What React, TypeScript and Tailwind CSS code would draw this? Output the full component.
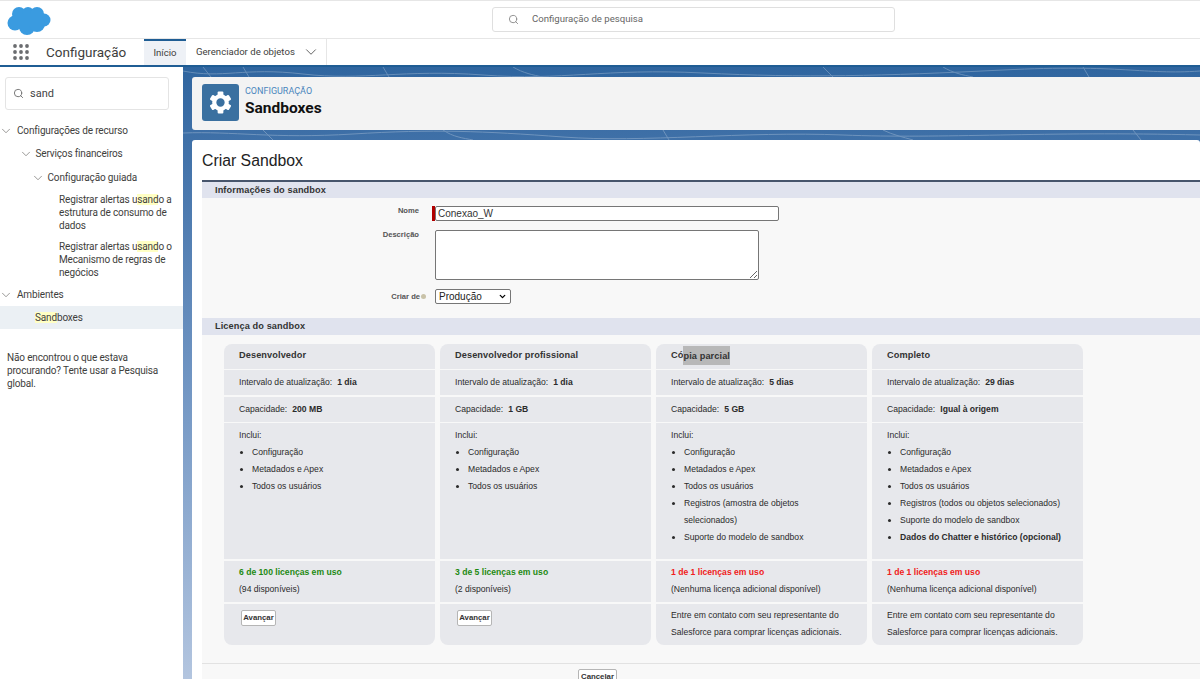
import { ChevronDown, Search } from "lucide-react"
import type { ReactNode } from "react"

const uiFont = "font-['Roboto','Noto_Sans',sans-serif]"
const formFont = "font-['Liberation_Sans',Arial,sans-serif]"

interface Plan {
  name: ReactNode
  interval: string
  capacity: string
  includes: ReactNode[]
  usage: string
  usageClass: string
  available: string
  canAdvance: boolean
}

const BASE = ["Configuração", "Metadados e Apex", "Todos os usuários"]

const PLANS: Plan[] = [
  {
    name: "Desenvolvedor",
    interval: "1 dia",
    capacity: "200 MB",
    includes: BASE,
    usage: "6 de 100 licenças em uso",
    usageClass: "text-[#1e8a12]",
    available: "(94 disponíveis)",
    canAdvance: true,
  },
  {
    name: "Desenvolvedor profissional",
    interval: "1 dia",
    capacity: "1 GB",
    includes: BASE,
    usage: "3 de 5 licenças em uso",
    usageClass: "text-[#1e8a12]",
    available: "(2 disponíveis)",
    canAdvance: true,
  },
  {
    name: (
      <>
        Có<span className="bg-[#b8b8b8] py-[4.5px]">pia parcial</span>
      </>
    ),
    interval: "5 dias",
    capacity: "5 GB",
    includes: [...BASE, "Registros (amostra de objetos selecionados)", "Suporte do modelo de sandbox"],
    usage: "1 de 1 licenças em uso",
    usageClass: "text-[#f02020]",
    available: "(Nenhuma licença adicional disponível)",
    canAdvance: false,
  },
  {
    name: "Completo",
    interval: "29 dias",
    capacity: "Igual à origem",
    includes: [
      ...BASE,
      "Registros (todos ou objetos selecionados)",
      "Suporte do modelo de sandbox",
      <b key="chatter">Dados do Chatter e histórico (opcional)</b>,
    ],
    usage: "1 de 1 licenças em uso",
    usageClass: "text-[#f02020]",
    available: "(Nenhuma licença adicional disponível)",
    canAdvance: false,
  },
]

function Mark({ children }: { children: ReactNode }) {
  return <span className="bg-[#ffffc4]">{children}</span>
}

function Chevron({ className }: { className: string }) {
  return <ChevronDown className={`h-[14px] w-[14px] shrink-0 text-[#706e6b] ${className}`} strokeWidth={1.2} />
}

function CloudLogo() {
  return (
    <svg viewBox="0 0 44 31" className="h-[31px] w-[44px]" fill="#3a9be0">
      <circle cx="12" cy="10" r="7" />
      <circle cx="21" cy="9" r="6" />
      <circle cx="30" cy="10" r="7" />
      <circle cx="37" cy="16" r="6.5" />
      <circle cx="8" cy="19" r="7.5" />
      <circle cx="20" cy="23" r="8" />
      <circle cx="30" cy="20" r="8" />
      <rect x="9" y="10" width="26" height="12" />
    </svg>
  )
}

function AppGrid() {
  const dots = [2, 8, 14]
  return (
    <svg viewBox="0 0 16 16" className="h-[16px] w-[16px]" fill="#6b6d70">
      {dots.map((y) => dots.map((x) => <circle key={`${x}-${y}`} cx={x} cy={y} r="1.9" />))}
    </svg>
  )
}

function GearIcon() {
  return (
    <svg viewBox="0 0 24 24" className="h-[25px] w-[25px]" fill="#ffffff">
      <circle cx="12" cy="12" r="6" fill="none" stroke="#ffffff" strokeWidth="4" />
      {[0, 60, 120, 180, 240, 300].map((a) => (
        <rect key={a} x="9.25" y="1.5" width="5.5" height="5" rx="1" transform={`rotate(${a} 12 12)`} />
      ))}
    </svg>
  )
}

function Sidebar() {
  return (
    <aside className={`w-[183px] shrink-0 bg-white text-[10px] leading-[13px] tracking-[-0.15px] text-[#3e3e3c] ${uiFont}`}>
      <div className="px-[5px] pt-[10px]">
        <div className="flex h-[33px] w-[164px] items-center rounded-[3px] border border-[#e4e4e4] pl-[7px]">
          <Search className="h-[11px] w-[11px] text-[#6f6f6f]" strokeWidth={2} />
          <span className="ml-[6px] text-[11px] tracking-normal text-[#444]">sand</span>
        </div>
      </div>
      <div className="mt-[14px] flex h-[13px] items-center">
        <Chevron className="-ml-[1.5px] mr-[4.5px]" />
        <span>Configurações de recurso</span>
      </div>
      <div className="mt-[10px] flex h-[13px] items-center pl-[18.5px]">
        <Chevron className="mr-[3px]" />
        <span>Serviços financeiros</span>
      </div>
      <div className="mt-[11px] flex h-[13px] items-center pl-[30.5px]">
        <Chevron className="mr-[3px]" />
        <span>Configuração guiada</span>
      </div>
      <p className="mt-[9px] pl-[59px] pr-[8px]">
        Registrar alertas u<Mark>sand</Mark>o a estrutura de consumo de dados
      </p>
      <p className="mt-[8px] pl-[59px] pr-[8px]">
        Registrar alertas u<Mark>sand</Mark>o o Mecanismo de regras de negócios
      </p>
      <div className="mt-[9px] flex h-[13px] items-center">
        <Chevron className="-ml-[1.5px] mr-[4.5px]" />
        <span>Ambientes</span>
      </div>
      <div className="mt-[5px] flex h-[23px] items-center bg-[#ebf0f4] pl-[35px]">
        <span>
          <Mark>Sand</Mark>boxes
        </span>
      </div>
      <p className="mt-[22px] pl-[7px] pr-[8px]">Não encontrou o que estava procurando? Tente usar a Pesquisa global.</p>
    </aside>
  )
}

function PlanCard({ plan }: { plan: Plan }) {
  const rowClass = "bg-[#e7e8ec] pl-[15px] pr-[19px]"
  return (
    <div className="flex h-[300.5px] w-[211px] flex-col gap-[1.5px] overflow-hidden rounded-[8px] text-[8.6px] text-[#2b2b2b]">
      <div className={`${rowClass} h-[24.5px] shrink-0 pt-[5px] text-[9.2px] font-bold leading-[12px] tracking-[0.1px] text-[#333]`}>
        <span className="whitespace-nowrap">{plan.name}</span>
      </div>
      <div className={`${rowClass} flex h-[25px] shrink-0 items-center`}>
        <span>Intervalo de atualização:</span>
        <b className="ml-[5px]">{plan.interval}</b>
      </div>
      <div className={`${rowClass} flex h-[25px] shrink-0 items-center`}>
        <span>Capacidade:</span>
        <b className="ml-[5px]">{plan.capacity}</b>
      </div>
      <div className={`${rowClass} h-[136px] shrink-0 pt-[3.5px] leading-[17.1px]`}>
        <div>Inclui:</div>
        <ul className="list-disc pl-[13px]">
          {plan.includes.map((item, i) => (
            <li key={i}>{item}</li>
          ))}
        </ul>
      </div>
      <div className={`${rowClass} h-[41.5px] shrink-0 pt-[3px] leading-[17px]`}>
        <div className={`font-bold ${plan.usageClass}`}>{plan.usage}</div>
        <div className="whitespace-nowrap">{plan.available}</div>
      </div>
      <div className={`${rowClass} flex-1 !pr-[8px] leading-[17.2px]`}>
        {plan.canAdvance ? (
          <button className="ml-[2px] mt-[6px] flex h-[16px] w-[35px] items-center justify-center rounded-[2px] border border-[#b5b5b5] bg-white text-[7.8px] font-bold text-[#333]">
            Avançar
          </button>
        ) : (
          <p className="pt-[3px]">Entre em contato com seu representante do Salesforce para comprar licenças adicionais.</p>
        )}
      </div>
    </div>
  )
}

function CreateSandbox() {
  return (
    <div className={`mt-[10px] flex-1 rounded-t-[3px] bg-white pl-[10px] ${formFont}`}>
      <h1 className="h-[40px] pt-[11px] text-[15.8px] leading-[19px] text-[#222]">Criar Sandbox</h1>
      <div className="border-t-2 border-[#47556c] bg-[#f8f8f8]">
        <div className="flex h-[16px] items-center bg-[#e0e3ee] pl-[13px] pt-[1px] text-[9.2px] font-bold tracking-[0.1px] text-[#333]">
          Informações do sandbox
        </div>
        <div className="h-[120px] pt-[8px]">
          <div className="flex items-start">
            <label className="w-[218px] pr-[1px] text-right text-[7.6px] font-bold leading-[10px] text-[#555]">Nome</label>
            <span className="ml-[12px] h-[15px] w-[3px] bg-[#b00000]" />
            <input
              readOnly
              value="Conexao_W"
              className="h-[15px] w-[344px] rounded-[2px] border border-[#767676] bg-white pl-[2px] text-[10px] text-[#333]"
            />
          </div>
          <div className="mt-[9px] flex items-start">
            <label className="w-[218px] pr-[1px] text-right text-[7.6px] font-bold leading-[10px] text-[#555]">Descrição</label>
            <textarea readOnly className="ml-[15px] h-[50px] w-[324px] rounded-[2px] border border-[#767676] bg-white" />
          </div>
          <div className="mt-[9px] flex items-center">
            <label className="flex w-[224px] items-center justify-end text-[7.6px] font-bold text-[#555]">
              Criar de
              <span className="ml-[1px] h-[5px] w-[5px] rounded-full bg-[#c9c2a8]" />
            </label>
            <div className="ml-[9px] flex h-[14.5px] w-[76px] items-center justify-between rounded-[2px] border border-[#767676] bg-white pl-[3px] pr-[3px] text-[10px] text-[#222]">
              Produção
              <ChevronDown className="h-[9px] w-[9px] text-black" strokeWidth={3.5} />
            </div>
          </div>
        </div>
        <div className="flex h-[17px] items-center bg-[#e0e3ee] pl-[13px] pt-[1px] text-[9.2px] font-bold tracking-[0.1px] text-[#333]">
          Licença do sandbox
        </div>
        <div className="flex gap-[5px] pb-[18.5px] pl-[22px] pt-[9px]">
          {PLANS.map((plan, i) => (
            <PlanCard key={i} plan={plan} />
          ))}
        </div>
        <div className="h-[30px] border-t border-[#e2e2e2] pl-[376px] pt-[5px]">
          <button className="flex h-[16px] w-[39px] items-center justify-center rounded-[2px] border border-[#b5b5b5] bg-white text-[7.8px] font-bold text-[#333]">
            Cancelar
          </button>
        </div>
      </div>
    </div>
  )
}

export default function App() {
  return (
    <div className="flex h-[679px] w-[1200px] flex-col overflow-hidden bg-white">
      <header className="flex h-[39px] shrink-0 items-center border-y border-[#e6e6e6] bg-white">
        <div className="ml-[7px] w-[485px]">
          <CloudLogo />
        </div>
        <div className={`flex h-[25px] w-[403px] items-center rounded-[3px] border border-[#dfdfdf] pl-[15px] text-[9.6px] text-[#666] ${uiFont}`}>
          <Search className="h-[11px] w-[11px] text-[#8a8a8a]" strokeWidth={2} />
          <span className="ml-[13px]">Configuração de pesquisa</span>
        </div>
      </header>

      <nav className={`flex h-[28px] shrink-0 items-stretch border-b-2 border-[#1f5d94] bg-white ${uiFont}`}>
        <div className="flex w-[144px] items-center pl-[13px]">
          <AppGrid />
          <span className="ml-[17px] text-[13.5px] text-[#3e3e3c]">Configuração</span>
        </div>
        <div className="flex w-[42px] items-center justify-center border-t-2 border-[#1f5d94] bg-[#eef1f6] text-[9.6px] text-[#3e3e3c]">
          Início
        </div>
        <div className="flex w-[141px] items-center border-r border-[#e6e6e6] pl-[10px] pr-[6px] text-[9.6px] text-[#3e3e3c]">
          Gerenciador de objetos
          <ChevronDown className="ml-auto h-[18px] w-[18px] text-[#555]" strokeWidth={1.2} />
        </div>
      </nav>

      <div className="flex min-h-0 flex-1">
        <Sidebar />
        <main className="relative flex min-w-0 flex-1 flex-col bg-gradient-to-b from-[#2f659f] via-[#6f94c2] to-[#b3c5df] pl-[9px]">
          <svg className="absolute left-0 top-0 h-[75px] w-full opacity-25" viewBox="0 0 1017 75" fill="none" stroke="#ffffff" strokeWidth="1">
            <path d="M0 4C40 12 60 0 120 7S220 2 300 8 420 1 520 6 700 9 820 3 960 8 1017 4" />
            <path d="M20 0L28 10M60 0L66 10M200 0L206 10M330 0C340 6 350 8 360 10M640 0L650 10M760 0C770 6 780 8 790 10M900 0L906 10" />
            <path d="M0 66C50 64 90 72 170 67S300 64 380 70 560 64 660 68 860 64 1017 68" />
            <path d="M80 63L90 73M260 63C270 70 280 71 290 73M480 63L486 73M700 63C710 68 720 70 730 73M950 63L958 73" />
          </svg>
          <section className="relative mt-[10px] flex h-[53px] shrink-0 items-center rounded-l-[3px] bg-[#f3f3f3] pb-[2px] pl-[10px]">
            <div className="flex h-[37px] w-[37px] items-center justify-center rounded-[3px] bg-[#3a70a0]">
              <GearIcon />
            </div>
            <div className={`ml-[6px] pb-[3px] ${uiFont}`}>
              <div className="mb-[1.5px] text-[9px] leading-[13px] text-[#4a86bd]">CONFIGURAÇÃO</div>
              <div className="text-[15.5px] font-bold leading-[18px] text-[#111]">Sandboxes</div>
            </div>
          </section>
          <div className="relative flex min-h-0 flex-1 flex-col">
            <CreateSandbox />
          </div>
        </main>
      </div>
    </div>
  )
}
